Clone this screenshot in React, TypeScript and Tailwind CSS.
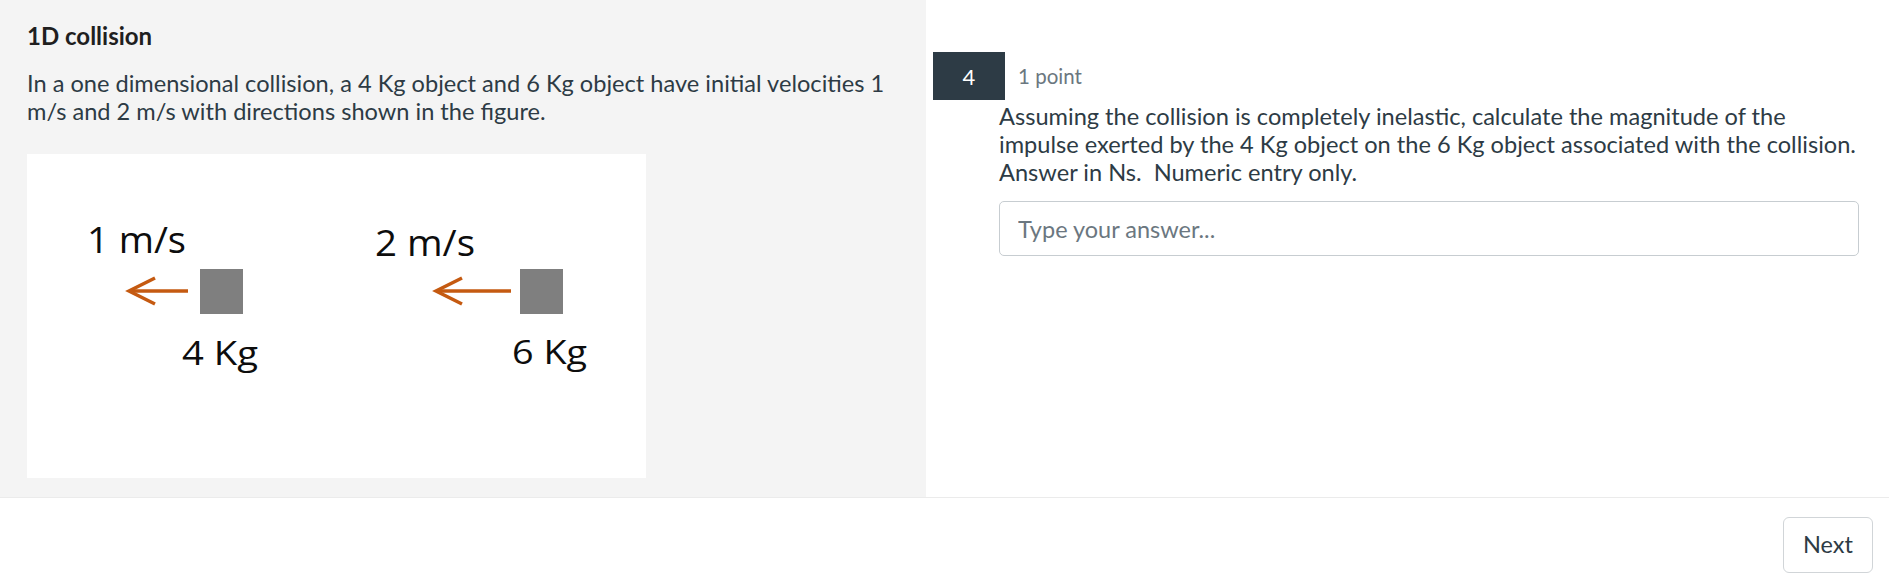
import React from "react";

const lato = { fontFamily: "Lato, 'Open Sans', sans-serif" };

function CollisionFigure() {
  return (
    <div className="w-[619px] h-[324px] bg-white">
      <svg width="619" height="324" viewBox="0 0 619 324" style={{ fontFamily: "'Open Sans', sans-serif" }}>
        <text x="60" y="99" fontSize="36" fontWeight="500" fill="#0d0d0d" textLength="99" lengthAdjust="spacingAndGlyphs">1 m/s</text>
        <text x="348" y="102" fontSize="36" fontWeight="500" fill="#0d0d0d" textLength="100" lengthAdjust="spacingAndGlyphs">2 m/s</text>

        <line x1="161" y1="137" x2="102" y2="137" stroke="#c55a11" strokeWidth="3.5" />
        <polyline points="128,124 102,137 128,150" fill="none" stroke="#c55a11" strokeWidth="3.5" />
        <rect x="173" y="115" width="43" height="45" fill="#7f7f7f" />

        <line x1="484" y1="137" x2="409" y2="137" stroke="#c55a11" strokeWidth="3.5" />
        <polyline points="435,124 409,137 435,150" fill="none" stroke="#c55a11" strokeWidth="3.5" />
        <rect x="493" y="115" width="43" height="45" fill="#7f7f7f" />

        <text x="155" y="211" fontSize="33" fontWeight="500" fill="#0d0d0d" textLength="76" lengthAdjust="spacingAndGlyphs">4 Kg</text>
        <text x="485" y="210" fontSize="33" fontWeight="500" fill="#0d0d0d" textLength="75" lengthAdjust="spacingAndGlyphs">6 Kg</text>
      </svg>
    </div>
  );
}

export default function App() {
  return (
    <div className="min-h-screen w-[1889px] bg-white" style={lato}>
      {/* quiz row */}
      <div className="flex border-b border-[#ebebeb]">
        {/* left: shared prompt */}
        <section className="w-[926px] shrink-0 bg-[#f4f4f4] pl-[27px] pr-[27px] pt-[22px] pb-[19px]">
          <h2 className="text-[24px] leading-[28px] font-bold text-[#1f1f1f]">1D collision</h2>
          <p className="mt-[19px] text-[23.6px] leading-[28.3px] text-[#2d3b45]">
            In a one dimensional collision, a 4 Kg object and 6 Kg object have initial velocities 1 m/s and 2 m/s with directions shown in the figure.
          </p>
          <div className="mt-[28px]">
            <CollisionFigure />
          </div>
        </section>

        {/* right: question */}
        <section className="flex-1 pl-[7px] pr-[30px] pt-[52px]">
          <div className="flex items-center">
            <div className="flex h-[48px] w-[72px] items-center justify-center bg-[#2d3b45] text-[22px] text-white">4</div>
            <span className="ml-[13px] text-[20.5px] text-[#6b7780]">1 point</span>
          </div>
          <div className="ml-[66px]">
            <p className="mt-[2px] mr-[-30px] whitespace-nowrap text-[23.6px] leading-[28px] text-[#2d3b45]">
              Assuming the collision is completely inelastic, calculate the magnitude of the
              <br />
              impulse exerted by the 4 Kg object on the 6 Kg object associated with the collision.
              <br />
              Answer in Ns.&nbsp; Numeric entry only.
            </p>
            <input
              type="text"
              placeholder="Type your answer..."
              className="mt-[15px] h-[55px] w-full rounded-[5px] border border-[#c7cdd1] bg-white px-[18px] text-[23.5px] text-[#2d3b45] placeholder:text-[#6b7780] outline-none"
            />
          </div>
        </section>
      </div>

      {/* footer */}
      <div className="flex justify-end pt-[19px] pr-[16px]">
        <button className="h-[56px] w-[90px] rounded-[6px] border border-[#d1d5d8] bg-white text-[23.5px] text-[#2d3b45]">
          Next
        </button>
      </div>
    </div>
  );
}
